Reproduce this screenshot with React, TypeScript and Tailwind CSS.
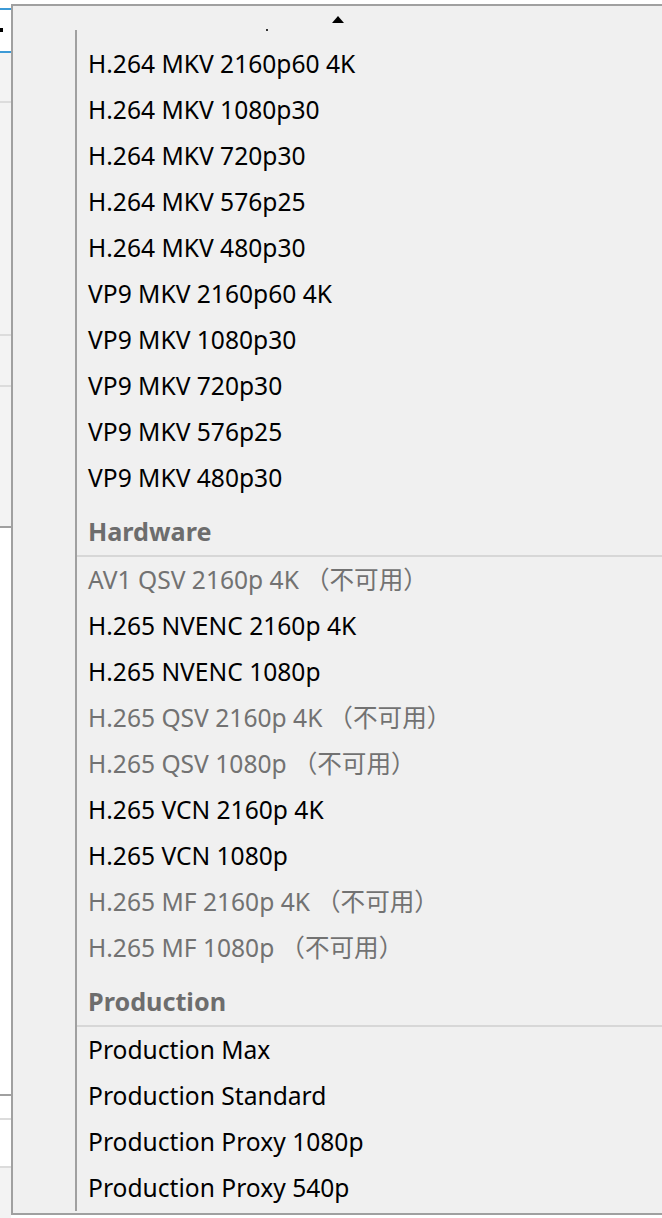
import React from 'react';

type Item = { label: string; disabled?: boolean };
type Group = { title?: string; items: Item[] };

const groups: Group[] = [
  {
    items: [
      { label: 'H.264 MKV 2160p60 4K' },
      { label: 'H.264 MKV 1080p30' },
      { label: 'H.264 MKV 720p30' },
      { label: 'H.264 MKV 576p25' },
      { label: 'H.264 MKV 480p30' },
      { label: 'VP9 MKV 2160p60 4K' },
      { label: 'VP9 MKV 1080p30' },
      { label: 'VP9 MKV 720p30' },
      { label: 'VP9 MKV 576p25' },
      { label: 'VP9 MKV 480p30' },
    ],
  },
  {
    title: 'Hardware',
    items: [
      { label: 'AV1 QSV 2160p 4K', disabled: true },
      { label: 'H.265 NVENC 2160p 4K' },
      { label: 'H.265 NVENC 1080p' },
      { label: 'H.265 QSV 2160p 4K', disabled: true },
      { label: 'H.265 QSV 1080p', disabled: true },
      { label: 'H.265 VCN 2160p 4K' },
      { label: 'H.265 VCN 1080p' },
      { label: 'H.265 MF 2160p 4K', disabled: true },
      { label: 'H.265 MF 1080p', disabled: true },
    ],
  },
  {
    title: 'Production',
    items: [
      { label: 'Production Max' },
      { label: 'Production Standard' },
      { label: 'Production Proxy 1080p' },
      { label: 'Production Proxy 540p' },
    ],
  },
];

const font = { fontFamily: '"Noto Sans", "Noto Sans CJK SC", sans-serif' };

function Row({ item }: { item: Item }) {
  return (
    <div
      className={`h-[46px] flex items-center pl-[11px] text-[24.6px] leading-none whitespace-nowrap ${
        item.disabled ? 'text-[#727272]' : 'text-black'
      }`}
    >
      <span>{item.label}</span>
      {item.disabled && <span className="ml-[6px]">（不可用）</span>}
    </div>
  );
}

export default function App() {
  return (
    <div className="w-[662px] h-[1218px] flex bg-white overflow-hidden" style={font}>
      {/* page behind the dropdown */}
      <div className="w-[11px] flex flex-col shrink-0">
        <div className="h-[10px] border-b-2 border-[#3c9ad6] relative">
          <div className="absolute left-0 top-[28px] w-[3px] h-[4px] bg-black" />
        </div>
        <div className="h-[43px] bg-white border-b-2 border-[#3c9ad6]" />
        <div className="h-[50px] bg-[#f3f3f3] border-b-2 border-[#dcdcdc]" />
        <div className="h-[233px] bg-[#f3f3f3] border-b-2 border-[#dcdcdc]" />
        <div className="h-[51px] bg-[#f3f3f3] border-b-2 border-[#dcdcdc]" />
        <div className="h-[141px] bg-[#f3f3f3] border-b-2 border-[#a0a0a0]" />
        <div className="h-[568px] bg-white border-b-2 border-[#a0a0a0]" />
        <div className="h-[24px] bg-white border-b-2 border-[#dcdcdc]" />
        <div className="h-[48px] bg-white border-b-2 border-[#dcdcdc]" />
        <div className="flex-1 bg-[#f3f3f3]" />
      </div>

      {/* dropdown popup */}
      <div className="flex-1 mt-[4px] h-[1211px] bg-[#f0f0f0] border-l-2 border-t-2 border-b-2 border-[#a0a0a0] flex flex-col">
        <div className="h-[24px] relative shrink-0">
          <div className="absolute left-[319px] top-[10px] w-0 h-0 border-l-[6px] border-r-[6px] border-b-[7px] border-l-transparent border-r-transparent border-b-black" />
          <div className="absolute left-[253px] top-[23px] w-[2px] h-[2px] bg-[#333]" />
        </div>
        <div className="ml-[62px] border-l-2 border-[#a0a0a0] pt-[11px] mb-[6px] flex-1">
          {groups.map((g, gi) => (
            <div key={gi}>
              {g.title && (
                <div className="mt-[8px]">
                  <div className="h-[46px] flex items-center pl-[11px] text-[25.2px] leading-none font-bold text-[#6d6d6d]">
                    {g.title}
                  </div>
                  <div className="h-[2px] bg-[#d7d7d7]" />
                </div>
              )}
              {g.items.map((it) => (
                <Row key={it.label} item={it} />
              ))}
            </div>
          ))}
        </div>
      </div>
    </div>
  );
}
